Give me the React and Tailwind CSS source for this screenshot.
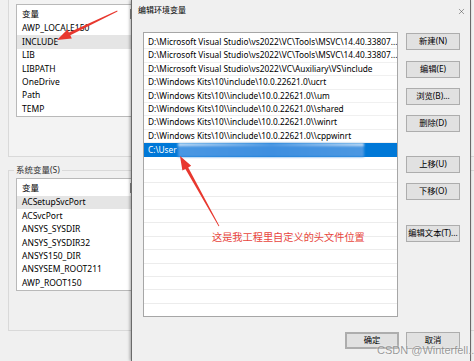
import React from "react";
import { X } from "lucide-react";

const topVars = ["AWP_LOCALE150", "INCLUDE", "LIB", "LIBPATH", "OneDrive", "Path", "TEMP"];
const sysVars = [
  "ACSetupSvcPort",
  "ACSvcPort",
  "ANSYS_SYSDIR",
  "ANSYS_SYSDIR32",
  "ANSYS150_DIR",
  "ANSYSEM_ROOT211",
  "AWP_ROOT150",
];

const paths = [
  String.raw`D:\Microsoft Visual Studio\vs2022\VC\Tools\MSVC\14.40.33807...`,
  String.raw`D:\Microsoft Visual Studio\vs2022\VC\Tools\MSVC\14.40.33807...`,
  String.raw`D:\Microsoft Visual Studio\vs2022\VC\Auxiliary\VS\include`,
  String.raw`D:\Windows Kits\10\include\10.0.22621.0\ucrt`,
  String.raw`D:\Windows Kits\10\\include\10.0.22621.0\\um`,
  String.raw`D:\Windows Kits\10\\include\10.0.22621.0\\shared`,
  String.raw`D:\Windows Kits\10\\include\10.0.22621.0\\winrt`,
  String.raw`D:\Windows Kits\10\\include\10.0.22621.0\\cppwinrt`,
];

const VarList = ({ items, selected }) => (
  <div className="w-[260px] h-[113px] bg-white border border-[#b9b9b9] overflow-hidden">
    <div className="flex h-[17px] items-center">
      <div className="w-[113px] pl-[5px] pt-[1px]">变量</div>
      <div className="h-[10px] border-l border-[#8a8a8a]" />
    </div>
    {items.map((name) => (
      <div
        key={name}
        className={`flex h-[13.4px] items-center ${name === selected ? "bg-[#e5e5e5]" : ""}`}
      >
        <div className="w-[114px] pl-[5px]">{name}</div>
      </div>
    ))}
  </div>
);

const Btn = ({ children, className = "" }) => (
  <div
    className={`flex h-[17px] w-[54px] items-center justify-center bg-[#e1e1e1] border border-[#adadad] text-[8.3px] ${className}`}
  >
    {children}
  </div>
);

export default function App() {
  const emptyRows = Array.from({ length: 12 });

  return (
    <div className="relative w-[474px] h-[361px] overflow-hidden bg-[#f0f0f0] text-black font-['Noto_Sans','Noto_Sans_CJK_SC',sans-serif]">
      {/* window behind: environment variables */}
      <div className="flex flex-col pl-[8px] text-[8.5px] leading-none">
        <div className="h-[157px] pl-[7px] pt-[4px] border-l border-b border-[#d9d9d9] bg-[#f3f3f3]">
          <VarList items={topVars} selected="INCLUDE" />
        </div>

        <div className="mt-[13px] h-[161px] pl-[7px] border-l border-t border-b border-[#d9d9d9]">
          <div className="-mt-[7px] ml-[-2px] w-fit px-[2px] bg-[#f0f0f0] h-[12px] leading-[12px] text-[#333]">
            系统变量(S)
          </div>
          <div className="mt-[2px]">
            <VarList items={sysVars} selected="ACSetupSvcPort" />
          </div>
        </div>
      </div>

      {/* edit dialog */}
      <div className="absolute left-[131px] top-0 w-[340px] h-[361px] flex flex-col bg-[#f0f0f0] border-l border-r border-[#6a6a6a] shadow-[-1px_0_3px_rgba(0,0,0,0.35)]">
        <div className="flex justify-between h-[32px]">
          <div className="pl-[6px] pt-[5px] text-[8px] leading-[9px]">编辑环境变量</div>
          <X size={9} strokeWidth={1.2} className="mt-[7px] mr-[4px] text-[#333]" />
        </div>

        <div className="flex pl-[11px]">
          <div className="w-[255px] h-[285px] bg-white border border-[#a6a6a6] pt-[3px] overflow-hidden text-[8.3px] leading-none">
            {paths.map((p, i) => (
              <div key={i} className="h-[13.4px] flex items-center pl-[4px] border-b border-[#f0f0f0] whitespace-nowrap">
                {p}
              </div>
            ))}
            <div className="relative h-[13.4px] flex items-center pl-[4px] bg-[#0078d7] text-white">
              C:\User
              <div className="absolute left-[34px] w-[186px] top-0 bottom-0 bg-gradient-to-r from-[#4a97e3] via-[#3e8fe0] to-[#4c98e2] blur-[1px]">
                <div className="h-[3px] bg-gradient-to-r from-white/70 via-white/10 to-white/70" />
              </div>
            </div>
            {emptyRows.map((_, i) => (
              <div key={i} className="h-[13.4px] border-b border-[#ececec]" />
            ))}
          </div>

          <div className="ml-[8px] flex flex-col">
            <Btn className="mt-[1px]">新建(N)</Btn>
            <Btn className="mt-[11px]">编辑(E)</Btn>
            <Btn className="mt-[10px]">浏览(B)...</Btn>
            <Btn className="mt-[10px]">删除(D)</Btn>
            <Btn className="mt-[24px]">上移(U)</Btn>
            <Btn className="mt-[10px]">下移(O)</Btn>
            <Btn className="mt-[25px]">编辑文本(T)...</Btn>
          </div>
        </div>

        <div className="flex justify-end gap-[7px] pr-[10px] mt-[15px]">
          <Btn className="border-2 border-[#0078d7]">确定</Btn>
          <Btn>取消</Btn>
        </div>
      </div>

      {/* annotation text */}
      <div className="absolute left-[212px] top-[231px] text-[10.2px] leading-[12px] text-[#e8453c] font-['Noto_Sans_CJK_SC',sans-serif]">
        这是我工程里自定义的头文件位置
      </div>

      {/* red arrows */}
      <svg className="absolute inset-0 pointer-events-none" width="474" height="361" viewBox="0 0 474 361">
        <polygon
          points="180,156 191.2,165.8 188.2,167.4 219.4,226 218.6,226.3 185.4,169 182.4,170.6"
          fill="#e8382f"
        />
        <polygon
          points="57,40 67.4,29.4 68.9,32.6 117.2,10.6 117.5,11.4 70.3,35.3 71.8,38.4"
          fill="#e8382f"
        />
      </svg>

      {/* watermark */}
      <div className="absolute left-[377px] top-[344px] text-[11px] leading-[13px] text-[#6e6e6e]/70 font-['Liberation_Sans',sans-serif] [text-shadow:0_0_2px_#fff] whitespace-nowrap">
        CSDN @Winterfell..
      </div>
    </div>
  );
}
